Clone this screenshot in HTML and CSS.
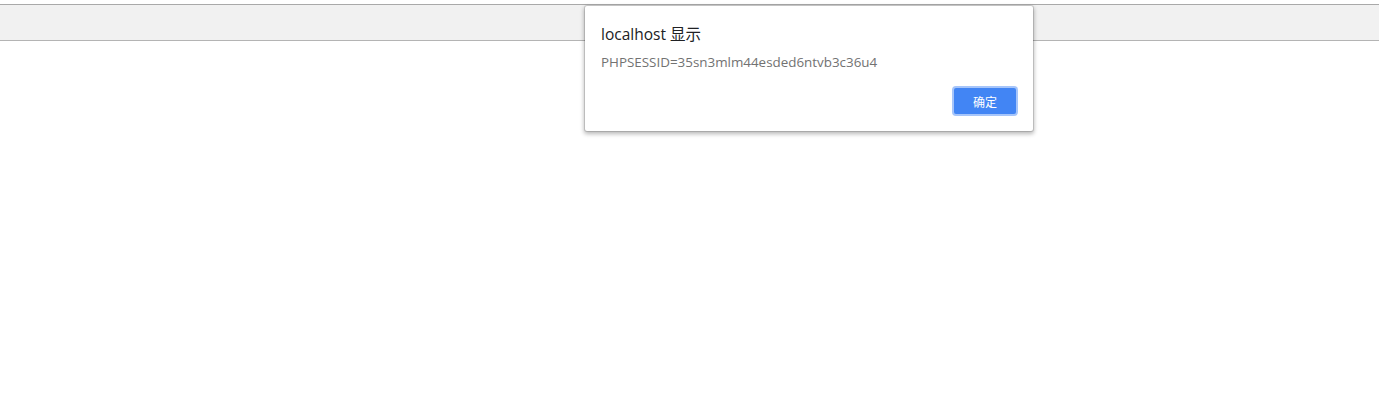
FILE: index.html
```html
<!DOCTYPE html>
<html lang="zh">
<head>
<meta charset="utf-8">
<title>alert</title>
<link rel="stylesheet" href="styles.css">
</head>
<body>
<div class="page">
  <div class="bar"></div>
</div>
<div class="dialog" role="alertdialog">
  <div class="title">localhost 显示</div>
  <div class="message">PHPSESSID=35sn3mlm44esded6ntvb3c36u4</div>
  <div class="actions">
    <button class="ok">确定</button>
  </div>
</div>
</body>
</html>
```

FILE: styles.css
```css
html, body {
  margin: 0;
  padding: 0;
  background: #ffffff;
  width: 1379px;
  height: 420px;
  overflow: hidden;
  font-family: "Open Sans", "Noto Sans", "Noto Sans CJK SC", sans-serif;
}
.page {
  padding-top: 4px;
}
.bar {
  height: 35px;
  background: #f1f1f1;
  border-top: 1px solid #a9a9a9;
  border-bottom: 1px solid #b4b4b4;
}
.dialog {
  position: absolute;
  left: 585px;
  top: 6px;
  width: 417px;
  padding: 18px 15px 15px 16px;
  background: #ffffff;
  border-radius: 2px;
  box-shadow: 0 0 0 1px rgba(0,0,0,0.12), 0 2px 4px 1px rgba(0,0,0,0.28);
}
.title {
  font-size: 15.5px;
  line-height: 20px;
  color: #202124;
}
.message {
  margin-top: 9px;
  font-size: 13.4px;
  line-height: 18px;
  color: #727272;
}
.actions {
  display: flex;
  justify-content: flex-end;
  margin-top: 15px;
}
.ok {
  width: 66px;
  height: 30px;
  background: #4285f4;
  color: #ffffff;
  border: 2px solid #a6c5fa;
  border-radius: 4px;
  font-family: "Noto Sans CJK SC", sans-serif;
  font-size: 12px;
  padding: 0;
}
```
